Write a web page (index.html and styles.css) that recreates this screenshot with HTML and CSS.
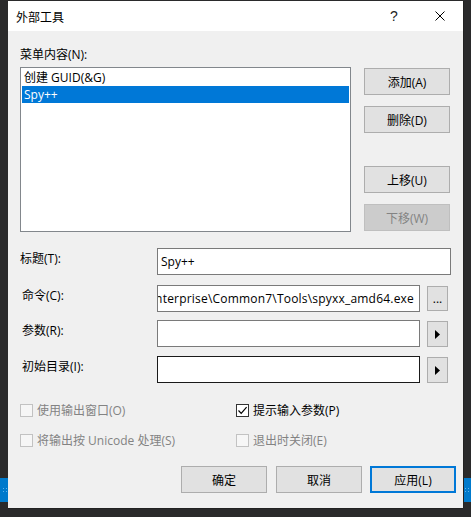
FILE: index.html
```html
<!DOCTYPE html>
<html lang="zh-CN">
<head>
<meta charset="utf-8">
<title>外部工具</title>
<link rel="stylesheet" href="styles.css">
</head>
<body>
<div class="screen">
  <div class="statusbar">
    <span class="grip grip-left"></span>
    <span class="grip grip-right"></span>
  </div>

  <div class="dialog">
    <div class="titlebar">
      <span class="title">外部工具</span>
      <span class="caption-btn help">?</span>
      <span class="caption-btn close">
        <svg width="10" height="10" viewBox="0 0 10 10"><path d="M0.5 0.5 L9.5 9.5 M9.5 0.5 L0.5 9.5" stroke="#000" stroke-width="1" fill="none"/></svg>
      </span>
    </div>

    <div class="content">
      <div class="section-label">菜单内容(N):</div>
      <div class="menu-row">
        <div class="listbox">
          <div class="item">创建 GUID(&amp;G)</div>
          <div class="item selected">Spy++</div>
        </div>
        <div class="side-buttons">
          <button class="btn">添加(A)</button>
          <button class="btn gap-s">删除(D)</button>
          <button class="btn gap-l">上移(U)</button>
          <button class="btn gap-s" disabled>下移(W)</button>
        </div>
      </div>

      <div class="fields">
        <div class="field f-title">
          <span class="field-label first">标题(T):</span>
          <div class="input wide">Spy++</div>
        </div>
        <div class="field f-cmd">
          <span class="field-label">命令(C):</span>
          <div class="input path"><span class="path-text">nterprise\Common7\Tools\spyxx_amd64.exe</span></div>
          <button class="mini-btn dots">...</button>
        </div>
        <div class="field f-args">
          <span class="field-label">参数(R):</span>
          <div class="input"></div>
          <button class="mini-btn">
            <svg width="5" height="9" viewBox="0 0 5 9"><polygon points="0,0 5,4.5 0,9" fill="#000"/></svg>
          </button>
        </div>
        <div class="field f-dir">
          <span class="field-label">初始目录(I):</span>
          <div class="input focused"></div>
          <button class="mini-btn">
            <svg width="5" height="9" viewBox="0 0 5 9"><polygon points="0,0 5,4.5 0,9" fill="#000"/></svg>
          </button>
        </div>
      </div>

      <div class="options">
        <label class="option disabled"><span class="box"></span>使用输出窗口(O)</label>
        <label class="option"><span class="box checked"><svg width="11" height="11" viewBox="0 0 11 11"><path d="M1.5 5.5 L4.2 8.3 L9.6 2.2" stroke="#000" stroke-width="1.2" fill="none"/></svg></span>提示输入参数(P)</label>
        <label class="option disabled row2"><span class="box"></span>将输出按 Unicode 处理(S)</label>
        <label class="option disabled row2"><span class="box"></span>退出时关闭(E)</label>
      </div>

      <div class="actions">
        <button class="btn ok">确定</button>
        <button class="btn">取消</button>
        <button class="btn default">应用(L)</button>
      </div>
    </div>
  </div>
</div>
</body>
</html>
```

FILE: styles.css
```css
* {
  box-sizing: border-box;
}

html, body {
  margin: 0;
  padding: 0;
}

body {
  width: 471px;
  height: 517px;
  overflow: hidden;
  background: #2a2a2b;
  font-family: "Open Sans", "Noto Sans CJK SC", sans-serif;
  font-size: 12px;
  color: #000;
}

.screen {
  position: relative;
  width: 471px;
  height: 517px;
}

/* host window status bar, visible at both sides of the dialog */
.statusbar {
  position: absolute;
  left: 0;
  top: 478px;
  width: 471px;
  height: 24px;
  background: #007acc;
}

.grip {
  position: absolute;
  top: 9px;
  width: 5px;
  height: 5px;
  background:
    radial-gradient(circle, #5fb2ea 0 0.8px, transparent 1px) 0 0 / 3px 3px;
}

.grip-left { left: 2px; }
.grip-right { right: 2px; }

/* dialog window */
.dialog {
  position: absolute;
  left: 8px;
  top: 1px;
  width: 455px;
  height: 507px;
  background: #f0f0f0;
  display: flex;
  flex-direction: column;
  box-shadow: 1px 0 0 #222, 0 1px 0 #222;
}

.titlebar {
  height: 30px;
  background: #fff;
  display: flex;
  align-items: center;
  padding-left: 8px;
}

.title {
  flex: 1;
  font-size: 12px;
  padding-top: 1px;
}

.caption-btn {
  width: 46px;
  height: 30px;
  display: flex;
  align-items: center;
  justify-content: center;
}

.help {
  font-size: 14px;
  font-family: "Liberation Sans", sans-serif;
  color: #222;
}

.content {
  flex: 1;
  padding: 0 7px 0 12px;
  display: flex;
  flex-direction: column;
}

.section-label {
  margin-top: 16px;
  line-height: 16px;
}

.menu-row {
  margin-top: 4px;
  display: flex;
}

.listbox {
  width: 331px;
  height: 165px;
  background: #fff;
  border: 1px solid #82878c;
  padding: 1px;
}

.item {
  height: 17px;
  line-height: 17px;
  padding-left: 2px;
  white-space: nowrap;
}

.item.selected {
  background: #0078d7;
  color: #fff;
}

.side-buttons {
  margin-left: 13px;
  padding-top: 1px;
  display: flex;
  flex-direction: column;
}

.btn {
  width: 86px;
  height: 27px;
  background: #e1e1e1;
  border: 1px solid #adadad;
  font: inherit;
  color: #000;
  padding: 0;
  margin: 0;
}

.btn:disabled {
  background: #cccccc;
  border-color: #bfbfbf;
  color: #838383;
}

.gap-s { margin-top: 11px; }
.gap-l { margin-top: 33px; }

/* text fields */
.fields {
  display: flex;
  flex-direction: column;
}

.field {
  display: flex;
  align-items: flex-start;
  height: 27px;
}

.f-title { margin-top: 16px; }
.f-cmd { margin-top: 10px; }
.f-args { margin-top: 8px; }
.f-dir { margin-top: 9px; }

.field-label {
  width: 137px;
  padding-top: 3px;
  padding-left: 2px;
  line-height: 16px;
}

.field-label.first {
  padding-left: 0;
}

.input {
  width: 263px;
  height: 27px;
  background: #fff;
  border: 1px solid #7a7a7a;
  padding: 0 3px;
  display: flex;
  align-items: center;
  white-space: nowrap;
  overflow: hidden;
}

.input.wide {
  width: 294px;
}

/* long path scrolled to its end, the start clipped by the field edge */
.input.path {
  justify-content: flex-end;
  padding: 0 5px 0 0;
}

.path-text {
  flex: none;
  letter-spacing: 0.2px;
}

.input.focused {
  border-color: #1a1a1a;
}

.mini-btn {
  width: 21px;
  height: 26px;
  margin-left: 7px;
  margin-top: 1px;
  background: #e1e1e1;
  border: 1px solid #adadad;
  padding: 0;
  display: flex;
  align-items: center;
  justify-content: center;
  font: inherit;
  color: #000;
}

.mini-btn.dots {
  height: 25px;
  align-items: flex-end;
  padding-bottom: 6px;
  line-height: 10px;
}

/* check options */
.options {
  margin-top: 19px;
  display: grid;
  grid-template-columns: 216px 1fr;
  row-gap: 14px;
}

.option {
  display: flex;
  align-items: center;
  height: 16px;
  white-space: nowrap;
}

.option.disabled {
  color: #838383;
}

.box {
  width: 13px;
  height: 13px;
  border: 1px solid #333;
  background: #fff;
  margin-right: 4px;
  display: flex;
  align-items: center;
  justify-content: center;
}

.option.disabled .box {
  border-color: #c2c2c2;
  background: #f6f6f6;
}

/* dialog buttons */
.actions {
  margin-top: 18px;
  display: flex;
  justify-content: flex-end;
  gap: 8px;
}

.btn.ok {
  margin-right: 1px;
}

.btn.default {
  border: 2px solid #0078d7;
}
```
